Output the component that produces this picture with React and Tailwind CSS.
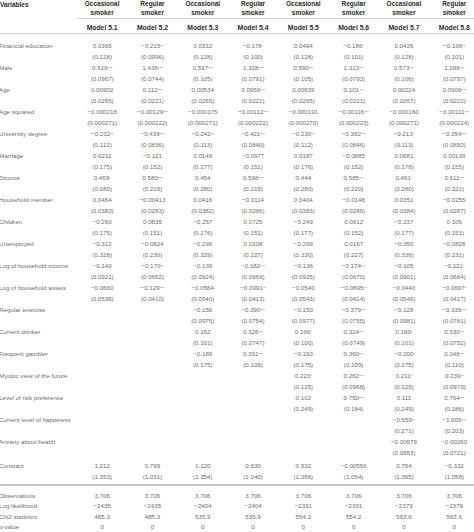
import React from 'react'

const cols = [
  'Occasional', 'Regular', 'Occasional', 'Regular',
  'Occasional', 'Regular', 'Occasional', 'Regular',
]

const models = ['5.1', '5.2', '5.3', '5.4', '5.5', '5.6', '5.7', '5.8']

// each variable: label, then 8 cells of [coef, se] or null
const rows = [
  ['Financial education', [['0.0365', '(0.128)'], ['−0.215**', '(0.0996)'], ['0.0332', '(0.128)'], ['−0.178*', '(0.100)'], ['0.0464', '(0.128)'], ['−0.186*', '(0.101)'], ['0.0426', '(0.128)'], ['−0.198**', '(0.101)']]],
  ['Male', [['0.619***', '(0.0967)'], ['1.436***', '(0.0744)'], ['0.597***', '(0.105)'], ['1.328***', '(0.0791)'], ['0.590***', '(0.105)'], ['1.313***', '(0.0792)'], ['0.573***', '(0.106)'], ['1.288***', '(0.0797)']]],
  ['Age', [['0.00902', '(0.0265)'], ['0.112***', '(0.0221)'], ['0.00534', '(0.0265)'], ['0.0958***', '(0.0221)'], ['0.00639', '(0.0265)'], ['0.101***', '(0.0221)'], ['0.00224', '(0.0267)'], ['0.0906***', '(0.0222)']]],
  ['Age squared', [['−0.000218', '(0.000271)'], ['−0.00129***', '(0.000222)'], ['−0.000175', '(0.000271)'], ['−0.00112***', '(0.000222)'], ['−0.000191', '(0.000270)'], ['−0.00116***', '(0.000223)'], ['−0.000160', '(0.000271)'], ['−0.00111***', '(0.000224)']]],
  ['University degree', [['−0.232**', '(0.112)'], ['−0.439***', '(0.0836)'], ['−0.242**', '(0.113)'], ['−0.421***', '(0.0840)'], ['−0.230**', '(0.112)'], ['−0.382***', '(0.0846)'], ['−0.213*', '(0.113)'], ['−0.354***', '(0.0850)']]],
  ['Marriage', [['0.0211', '(0.175)'], ['−0.121', '(0.152)'], ['0.0149', '(0.177)'], ['−0.0977', '(0.151)'], ['0.0187', '(0.176)'], ['−0.0885', '(0.152)'], ['0.0681', '(0.178)'], ['0.00139', '(0.155)']]],
  ['Divorce', [['0.469*', '(0.280)'], ['0.580***', '(0.219)'], ['0.454', '(0.280)'], ['0.598***', '(0.219)'], ['0.444', '(0.280)'], ['0.585***', '(0.220)'], ['0.461*', '(0.280)'], ['0.611***', '(0.221)']]],
  ['Household member', [['0.0464', '(0.0383)'], ['−0.00413', '(0.0283)'], ['0.0416', '(0.0382)'], ['−0.0114', '(0.0286)'], ['0.0404', '(0.0383)'], ['−0.0148', '(0.0286)'], ['0.0351', '(0.0384)'], ['−0.0255', '(0.0287)']]],
  ['Children', [['−0.260', '(0.175)'], ['0.0835', '(0.151)'], ['−0.257', '(0.176)'], ['0.0725', '(0.151)'], ['−0.249', '(0.177)'], ['0.0812', '(0.152)'], ['−0.237', '(0.177)'], ['0.106', '(0.153)']]],
  ['Unemployed', [['−0.312', '(0.328)'], ['−0.0624', '(0.230)'], ['−0.299', '(0.329)'], ['0.0108', '(0.227)'], ['−0.299', '(0.330)'], ['0.0167', '(0.227)'], ['−0.350', '(0.336)'], ['−0.0826', '(0.231)']]],
  ['Log of household income', [['−0.140', '(0.0921)'], ['−0.170**', '(0.0662)'], ['−0.139', '(0.0924)'], ['−0.182***', '(0.0669)'], ['−0.136', '(0.0925)'], ['−0.174***', '(0.0670)'], ['−0.105', '(0.0901)'], ['−0.121*', '(0.0684)']]],
  ['Log of household assets', [['−0.0660', '(0.0536)'], ['−0.129***', '(0.0410)'], ['−0.0564', '(0.0540)'], ['−0.0991**', '(0.0413)'], ['−0.0540', '(0.0543)'], ['−0.0895**', '(0.0414)'], ['−0.0440', '(0.0546)'], ['−0.0697*', '(0.0417)']]],
  ['Regular exercise', [null, null, ['−0.156', '(0.0975)'], ['−0.390***', '(0.0754)'], ['−0.150', '(0.0977)'], ['−0.379***', '(0.0755)'], ['−0.128', '(0.0981)'], ['−0.336***', '(0.0761)']]],
  ['Current drinker', [null, null, ['0.162', '(0.101)'], ['0.326***', '(0.0747)'], ['0.166*', '(0.100)'], ['0.324***', '(0.0749)'], ['0.169*', '(0.101)'], ['0.330***', '(0.0752)']]],
  ['Frequent gambler', [null, null, ['−0.189', '(0.175)'], ['0.391***', '(0.109)'], ['−0.193', '(0.175)'], ['0.360***', '(0.109)'], ['−0.200', '(0.175)'], ['0.346***', '(0.110)']]],
  ['Myopic view of the future', [null, null, null, null, ['0.223*', '(0.125)'], ['0.262***', '(0.0968)'], ['0.211*', '(0.125)'], ['0.239**', '(0.0973)']]],
  ['Level of risk preference', [null, null, null, null, ['0.102', '(0.249)'], ['0.750***', '(0.184)'], ['0.111', '(0.249)'], ['0.764***', '(0.186)']]],
  ['Current level of happiness', [null, null, null, null, null, null, ['−0.559**', '(0.271)'], ['−1.005***', '(0.203)']]],
  ['Anxiety about health', [null, null, null, null, null, null, ['−0.00679', '(0.0953)'], ['−0.00260', '(0.0721)']]],
]

const constant = [['1.212', '(1.353)'], ['0.799', '(1.031)'], ['1.120', '(1.354)'], ['0.830', '(1.040)'], ['0.932', '(1.366)'], ['−0.00556', '(1.054)'], ['0.754', '(1.365)'], ['−0.332', '(1.058)']]

const stats = [
  ['Observations', ['3,706', '3,706', '3,706', '3,706', '3,706', '3,706', '3,706', '3,706']],
  ['Log likelihood', ['−2435', '−2435', '−2404', '−2404', '−2391', '−2391', '−2379', '−2379']],
  ['Chi2 statistics', ['485.3', '485.3', '535.9', '535.9', '554.2', '554.2', '563.6', '563.6']],
  ['p-value', ['0', '0', '0', '0', '0', '0', '0', '0']],
]

const grid = 'grid grid-cols-[78px_repeat(8,50.3px)]'

const Num = ({ v }) => {
  const m = v.match(/^(.*?)(\**)$/)
  return (
    <>
      {m[1]}
      {m[2] && <sup className="text-[4px] relative top-[-0.5px]">{m[2]}</sup>}
    </>
  )
}

const Block = ({ label, cells }) => (
  <div className={grid}>
    <div className="leading-[11px] whitespace-nowrap">{label}</div>
    {cells.map((c, i) => (
      <div key={i} className="text-center leading-[11px] whitespace-nowrap">
        <div className="h-[11px]">{c ? <Num v={c[0]} /> : null}</div>
        <div className="h-[11px]">{c ? c[1] : null}</div>
      </div>
    ))}
  </div>
)

export default function App() {
  return (
    <div
      className="w-[474px] h-[532px] overflow-hidden bg-white text-[#6e6e6e] text-[6.2px]"
      style={{ fontFamily: '"Liberation Sans", Arial, sans-serif' }}
    >
      <div className="ml-[-1px] w-[481px]">
        {/* column headers */}
        <div className={`${grid} mt-[-1.5px] font-bold text-[#2b2b2b] text-[6.5px] leading-[9px]`}>
          <div className="ml-[1px] pt-[1px]">Variables</div>
          {cols.map((c, i) => (
            <div key={i} className="text-center border-b border-[#cfcfcf] pb-[1px]">
              <div>{c}</div>
              <div>smoker</div>
            </div>
          ))}
        </div>

        <div className={`${grid} h-[15.5px] pt-[3px] border-b border-[#cfcfcf] font-bold text-[#2b2b2b] text-[6.8px] leading-[12px]`}>
          <div />
          {models.map((m) => (
            <div key={m} className="text-center">Model {m}</div>
          ))}
        </div>

        <div className="pt-[6px]">
          {rows.map(([label, cells]) => (
            <Block key={label} label={label} cells={cells} />
          ))}
        </div>

        <div className="pt-[2px] pb-[2px] border-b-2 border-[#c8c8c8]">
          <Block label="Constant" cells={constant} />
        </div>

        <div className="pt-[5px]">
          {stats.map(([label, vals]) => (
            <div key={label} className={`${grid} leading-[10.3px]`}>
              <div className="whitespace-nowrap">{label}</div>
              {vals.map((v, i) => (
                <div key={i} className="text-center">{v}</div>
              ))}
            </div>
          ))}
        </div>
      </div>
    </div>
  )
}
